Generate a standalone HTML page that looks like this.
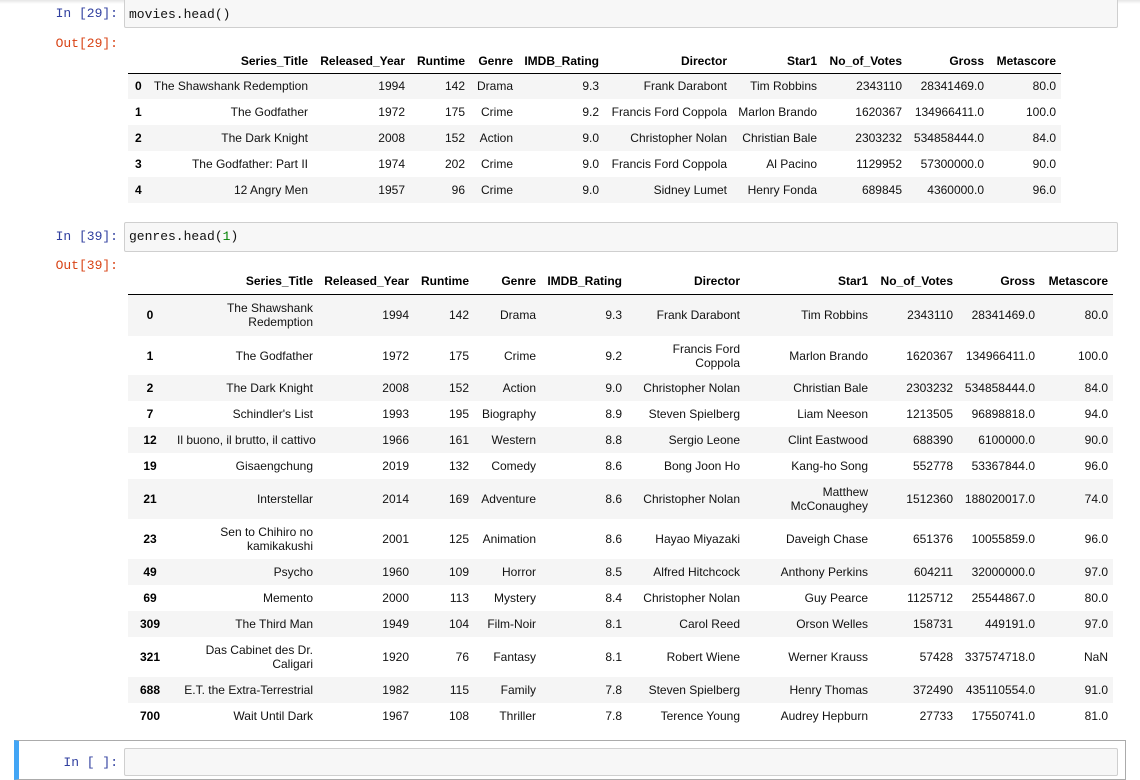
<!DOCTYPE html>
<html><head><meta charset="utf-8"><style>
*{margin:0;padding:0;box-sizing:border-box}
body{width:1140px;height:778px;background:#fff;position:relative;overflow:hidden;font-family:"Liberation Sans",Arial,sans-serif;color:#111}
.mono{font-family:"Liberation Mono","DejaVu Sans Mono",monospace;font-size:13px}
.prompt{position:absolute;right:1022px;color:#303f9f;white-space:pre}
.out{position:absolute;right:1022px;color:#d84315}
.box{position:absolute;left:124px;width:994px;background:#f7f7f7;border:1px solid #cfcfcf;border-radius:2px;padding-left:4px;white-space:pre}
table{position:absolute;border-collapse:collapse;font-size:12px;table-layout:fixed}
td,th{text-align:right;padding:0 5px;white-space:nowrap;line-height:14px;vertical-align:middle}
th{font-weight:bold;color:#000}
thead tr{border-bottom:1px solid #000}
tbody th{font-weight:bold}
tr.g{background:#f5f5f5}
</style></head><body>
<div style="position:absolute;left:0;top:0;width:1140px;height:4px;background:linear-gradient(#e6e6e6,#fff)"></div>
<div class="mono prompt" style="top:6px">In [29]:</div>
<div class="mono box" style="top:-2px;height:30px;padding-top:2px;line-height:28px">movies.head()</div>
<div class="mono out" style="top:36px">Out[29]:</div>
<table style="left:128px;top:49px;width:933px">
<colgroup><col style="width:20px"><col style="width:165px"><col style="width:97px"><col style="width:60px"><col style="width:48px"><col style="width:86px"><col style="width:128px"><col style="width:90px"><col style="width:85px"><col style="width:82px"><col style="width:72px"></colgroup>
<thead><tr style="height:24px"><th></th><th>Series_Title</th><th>Released_Year</th><th>Runtime</th><th>Genre</th><th>IMDB_Rating</th><th>Director</th><th>Star1</th><th>No_of_Votes</th><th>Gross</th><th>Metascore</th></tr></thead>
<tbody>
<tr class="g" style="height:26px"><th style="text-align:left;padding-left:7px">0</th><td>The Shawshank Redemption</td><td>1994</td><td>142</td><td>Drama</td><td>9.3</td><td>Frank Darabont</td><td>Tim Robbins</td><td>2343110</td><td>28341469.0</td><td>80.0</td></tr>
<tr style="height:26px"><th style="text-align:left;padding-left:7px">1</th><td>The Godfather</td><td>1972</td><td>175</td><td>Crime</td><td>9.2</td><td>Francis Ford Coppola</td><td>Marlon Brando</td><td>1620367</td><td>134966411.0</td><td>100.0</td></tr>
<tr class="g" style="height:26px"><th style="text-align:left;padding-left:7px">2</th><td>The Dark Knight</td><td>2008</td><td>152</td><td>Action</td><td>9.0</td><td>Christopher Nolan</td><td>Christian Bale</td><td>2303232</td><td>534858444.0</td><td>84.0</td></tr>
<tr style="height:26px"><th style="text-align:left;padding-left:7px">3</th><td>The Godfather: Part II</td><td>1974</td><td>202</td><td>Crime</td><td>9.0</td><td>Francis Ford Coppola</td><td>Al Pacino</td><td>1129952</td><td>57300000.0</td><td>90.0</td></tr>
<tr class="g" style="height:26px"><th style="text-align:left;padding-left:7px">4</th><td>12 Angry Men</td><td>1957</td><td>96</td><td>Crime</td><td>9.0</td><td>Sidney Lumet</td><td>Henry Fonda</td><td>689845</td><td>4360000.0</td><td>96.0</td></tr>
</tbody></table>

<div class="mono prompt" style="top:229px">In [39]:</div>
<div class="mono box" style="top:222px;height:30px;line-height:28px">genres.head(<span style="color:#008000">1</span>)</div>
<div class="mono out" style="top:258px">Out[39]:</div>
<table style="left:128px;top:269px;width:985px">
<colgroup><col style="width:44px"><col style="width:146px"><col style="width:96px"><col style="width:60px"><col style="width:67px"><col style="width:86px"><col style="width:118px"><col style="width:128px"><col style="width:85px"><col style="width:82px"><col style="width:73px"></colgroup>
<thead><tr style="height:25px"><th></th><th>Series_Title</th><th>Released_Year</th><th>Runtime</th><th>Genre</th><th>IMDB_Rating</th><th>Director</th><th>Star1</th><th>No_of_Votes</th><th>Gross</th><th>Metascore</th></tr></thead>
<tbody>
<tr class="g" style="height:42px"><th style="text-align:center">0</th><td>The Shawshank<br>Redemption</td><td>1994</td><td>142</td><td>Drama</td><td>9.3</td><td>Frank Darabont</td><td>Tim Robbins</td><td>2343110</td><td>28341469.0</td><td>80.0</td></tr>
<tr style="height:39px"><th style="text-align:center">1</th><td>The Godfather</td><td>1972</td><td>175</td><td>Crime</td><td>9.2</td><td>Francis Ford<br>Coppola</td><td>Marlon Brando</td><td>1620367</td><td>134966411.0</td><td>100.0</td></tr>
<tr class="g" style="height:26px"><th style="text-align:center">2</th><td>The Dark Knight</td><td>2008</td><td>152</td><td>Action</td><td>9.0</td><td>Christopher Nolan</td><td>Christian Bale</td><td>2303232</td><td>534858444.0</td><td>84.0</td></tr>
<tr style="height:26px"><th style="text-align:center">7</th><td>Schindler's List</td><td>1993</td><td>195</td><td>Biography</td><td>8.9</td><td>Steven Spielberg</td><td>Liam Neeson</td><td>1213505</td><td>96898818.0</td><td>94.0</td></tr>
<tr class="g" style="height:26px"><th style="text-align:center">12</th><td>Il buono, il brutto, il cattivo</td><td>1966</td><td>161</td><td>Western</td><td>8.8</td><td>Sergio Leone</td><td>Clint Eastwood</td><td>688390</td><td>6100000.0</td><td>90.0</td></tr>
<tr style="height:26px"><th style="text-align:center">19</th><td>Gisaengchung</td><td>2019</td><td>132</td><td>Comedy</td><td>8.6</td><td>Bong Joon Ho</td><td>Kang-ho Song</td><td>552778</td><td>53367844.0</td><td>96.0</td></tr>
<tr class="g" style="height:40px"><th style="text-align:center">21</th><td>Interstellar</td><td>2014</td><td>169</td><td>Adventure</td><td>8.6</td><td>Christopher Nolan</td><td>Matthew<br>McConaughey</td><td>1512360</td><td>188020017.0</td><td>74.0</td></tr>
<tr style="height:40px"><th style="text-align:center">23</th><td>Sen to Chihiro no<br>kamikakushi</td><td>2001</td><td>125</td><td>Animation</td><td>8.6</td><td>Hayao Miyazaki</td><td>Daveigh Chase</td><td>651376</td><td>10055859.0</td><td>96.0</td></tr>
<tr class="g" style="height:26px"><th style="text-align:center">49</th><td>Psycho</td><td>1960</td><td>109</td><td>Horror</td><td>8.5</td><td>Alfred Hitchcock</td><td>Anthony Perkins</td><td>604211</td><td>32000000.0</td><td>97.0</td></tr>
<tr style="height:26px"><th style="text-align:center">69</th><td>Memento</td><td>2000</td><td>113</td><td>Mystery</td><td>8.4</td><td>Christopher Nolan</td><td>Guy Pearce</td><td>1125712</td><td>25544867.0</td><td>80.0</td></tr>
<tr class="g" style="height:26px"><th style="text-align:center">309</th><td>The Third Man</td><td>1949</td><td>104</td><td>Film-Noir</td><td>8.1</td><td>Carol Reed</td><td>Orson Welles</td><td>158731</td><td>449191.0</td><td>97.0</td></tr>
<tr style="height:40px"><th style="text-align:center">321</th><td>Das Cabinet des Dr.<br>Caligari</td><td>1920</td><td>76</td><td>Fantasy</td><td>8.1</td><td>Robert Wiene</td><td>Werner Krauss</td><td>57428</td><td>337574718.0</td><td>NaN</td></tr>
<tr class="g" style="height:26px"><th style="text-align:center">688</th><td>E.T. the Extra-Terrestrial</td><td>1982</td><td>115</td><td>Family</td><td>7.8</td><td>Steven Spielberg</td><td>Henry Thomas</td><td>372490</td><td>435110554.0</td><td>91.0</td></tr>
<tr style="height:26px"><th style="text-align:center">700</th><td>Wait Until Dark</td><td>1967</td><td>108</td><td>Thriller</td><td>7.8</td><td>Terence Young</td><td>Audrey Hepburn</td><td>27733</td><td>17550741.0</td><td>81.0</td></tr>
</tbody></table>

<div style="position:absolute;left:14px;top:740px;width:1112px;height:40px;border:1px solid #ababab;border-left:5px solid #42a5f5"></div>
<div class="mono prompt" style="top:755px">In [ ]:</div>
<div class="mono box" style="top:748px;height:28px"></div>
</body></html>
